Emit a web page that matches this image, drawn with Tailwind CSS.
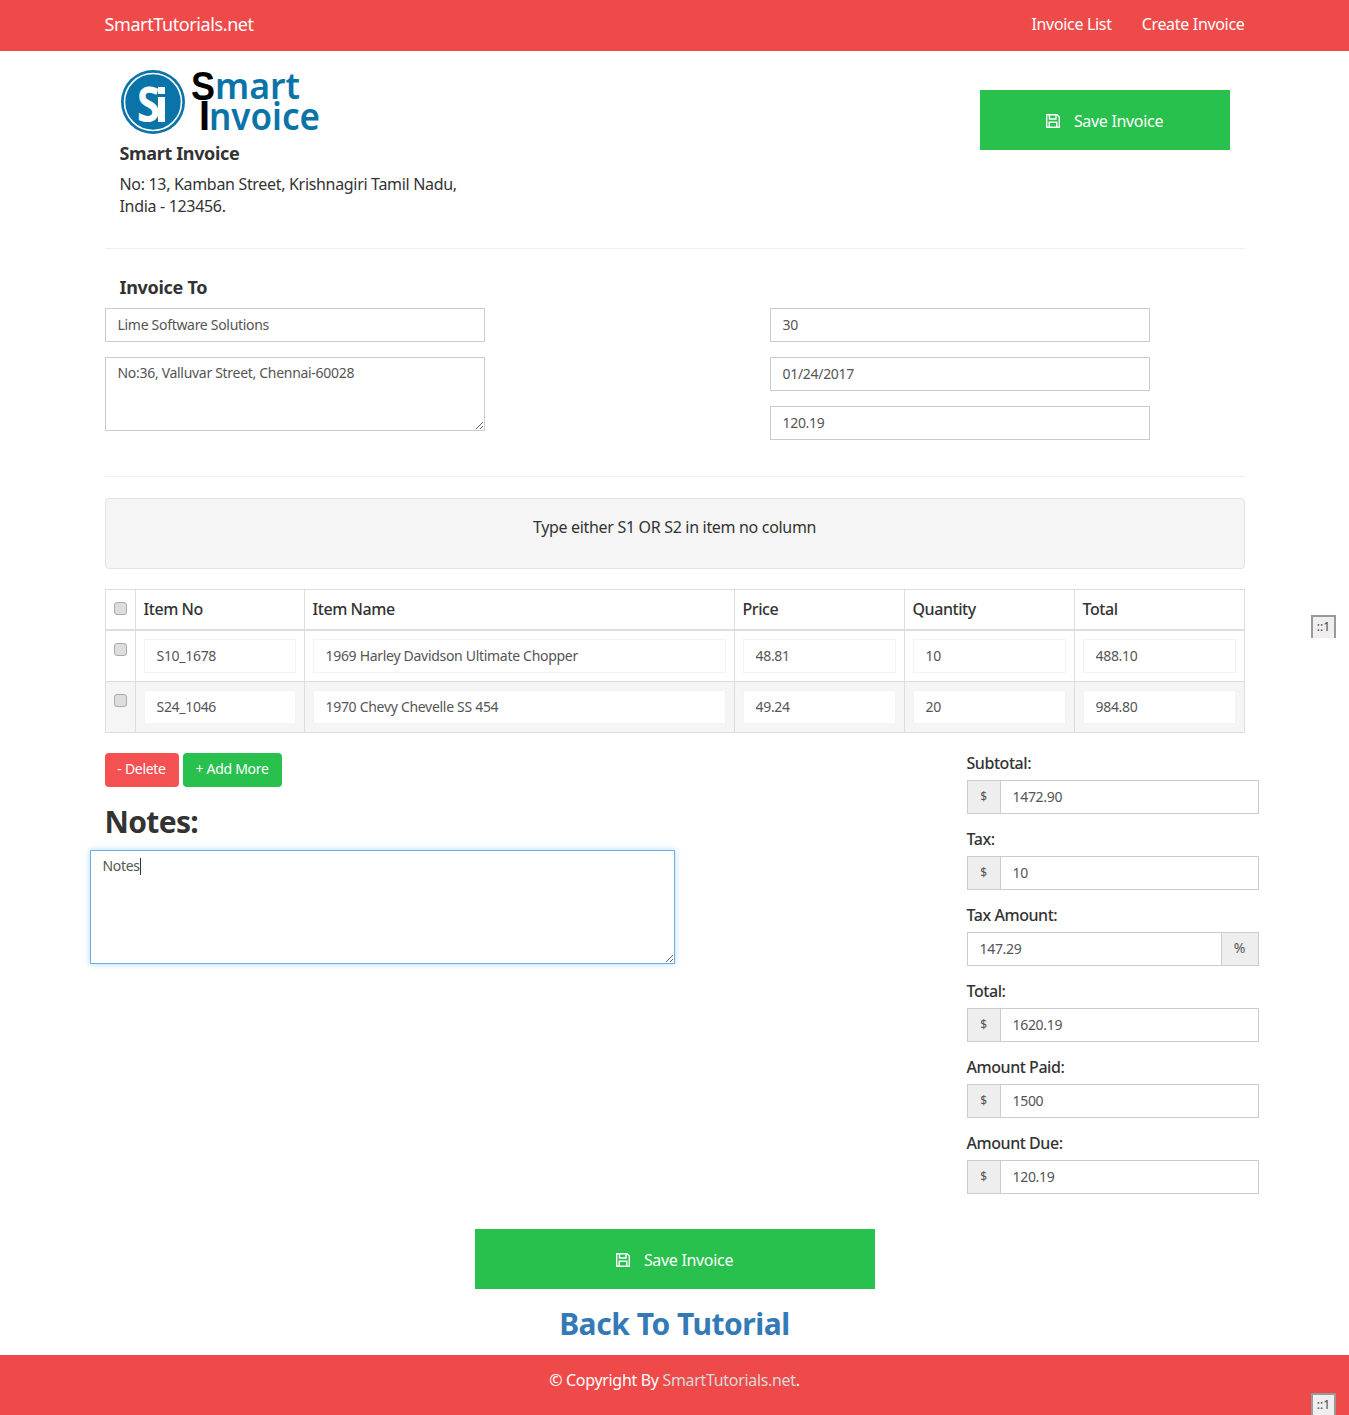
<!DOCTYPE html>
<html lang="en">
<head>
    <meta charset="UTF-8">
    <meta name="viewport" content="width=device-width, initial-scale=1.0">
    <title>Smart Invoice</title>
    <script src="https://cdn.jsdelivr.net/npm/@tailwindcss/browser@4"></script>
</head>
<body class="relative bg-white font-['Noto_Sans',sans-serif] text-[16px] leading-[22px] tracking-[-0.32px] text-[#333]">
    <!-- header -->
    <header class="h-[51px] bg-[#ef4a4a] px-[104.5px] pb-[4px] flex items-center justify-between text-white">
        <a href="#" class="text-[18px] tracking-[-0.4px]">SmartTutorials.net</a>
        <nav class="flex gap-[30px] text-[16px]">
            <a href="#">Invoice List</a>
            <a href="#">Create Invoice</a>
        </nav>
    </header>

    <main class="px-[104.5px]">
        <!-- company -->
        <section class="h-[198px] border-b border-[#eee] flex justify-between pl-[15px] pr-[15px] pt-[17px]">
            <div>
                <svg width="202" height="68" viewBox="0 0 202 68" class="block overflow-visible tracking-normal font-['Noto_Sans',sans-serif]">
                    <circle cx="33" cy="34" r="32" fill="#0a74a8"/>
                    <circle cx="33" cy="34" r="28.5" fill="none" stroke="#fff" stroke-width="1.6"/>
                    <text x="17" y="54" font-size="49" font-weight="700" fill="#fff" textLength="23" lengthAdjust="spacingAndGlyphs">S</text>
                    <rect x="38" y="29" width="7" height="25" fill="#fff"/>
                    <rect x="38" y="19" width="7" height="7" fill="#fff"/>
                    <text x="71" y="32" font-size="41" font-weight="700" fill="#000" font-family="Liberation Sans" textLength="24" lengthAdjust="spacingAndGlyphs">S</text>
                    <text x="95" y="31" font-size="36" font-weight="600" fill="#0a74a8" textLength="85" lengthAdjust="spacingAndGlyphs">mart</text>
                    <text x="79" y="62" font-size="42" font-weight="700" fill="#000" font-family="Liberation Sans" textLength="11" lengthAdjust="spacingAndGlyphs">I</text>
                    <text x="89" y="62" font-size="37" font-weight="600" fill="#0a74a8" textLength="111" lengthAdjust="spacingAndGlyphs">nvoice</text>
                </svg>
                <h2 class="mt-[5px] text-[18px] leading-[25px] font-bold tracking-[-0.35px]">Smart Invoice</h2>
                <p class="mt-[7px] w-[350px]">No: 13, Kamban Street, Krishnagiri Tamil Nadu, India - 123456.</p>
            </div>
            <div class="pt-[22px]">
                <button class="w-[250px] h-[60px] pt-[2px] bg-[#28c14e] text-white flex items-center justify-center gap-[14px]">
                    <svg width="14" height="14" viewBox="0 0 14 14" fill="none" stroke="#fff" stroke-width="1.4">
                        <path d="M.7.7H11L13.3 3V13.3H.7Z"/>
                        <path d="M3.5.7V5H10V.7"/>
                        <path d="M3.2 13.3V8.2H10.8V13.3"/>
                    </svg>
                    <span>Save Invoice</span>
                </button>
            </div>
        </section>

        <!-- invoice to -->
        <section class="h-[228px] border-b border-[#eee] pt-[26px]">
            <h3 class="pl-[15px] text-[18px] leading-[25px] font-bold tracking-[-0.3px]">Invoice To</h3>
            <div class="mt-[8px] flex gap-[285px]">
                <div class="w-[380px] flex flex-col gap-[15px]">
                    <input value="Lime Software Solutions" class="w-full h-[34px] px-[12px] pb-[2px] border border-[#ccc] text-[14px] tracking-[-0.3px] text-[#555] outline-none">
                    <textarea class="block w-full h-[74px] px-[12px] pt-[5px] border border-[#ccc] text-[14px] tracking-[-0.3px] leading-[20px] text-[#555] outline-none">No:36, Valluvar Street, Chennai-60028</textarea>
                </div>
                <div class="w-[380px] flex flex-col gap-[15px]">
                    <input value="30" class="w-full h-[34px] px-[12px] pb-[2px] border border-[#ccc] text-[14px] tracking-[-0.3px] text-[#555] outline-none">
                    <input value="01/24/2017" class="w-full h-[34px] px-[12px] pb-[2px] border border-[#ccc] text-[14px] tracking-[-0.3px] text-[#555] outline-none">
                    <input value="120.19" class="w-full h-[34px] px-[12px] pb-[2px] border border-[#ccc] text-[14px] tracking-[-0.3px] text-[#555] outline-none">
                </div>
            </div>
        </section>

        <!-- hint -->
        <div class="mt-[21px] h-[71px] bg-[#f5f5f5] border border-[#e3e3e3] rounded-[4px] pt-[17px] text-center">Type either S1 OR S2 in item no column</div>

        <!-- items -->
        <table class="mt-[20px] w-full table-fixed border-collapse">
            <colgroup>
                <col class="w-[30px]"><col class="w-[169px]"><col class="w-[430px]"><col class="w-[170px]"><col class="w-[170px]"><col class="w-[170px]">
            </colgroup>
            <thead>
                <tr class="h-[40px] text-left">
                    <th class="border border-b-2 border-[#ddd] px-[8px] align-middle"><input type="checkbox" class="appearance-none block mx-auto mb-[2px] w-[13px] h-[13px] bg-[#ddd] border border-[#aaa] rounded-[3px]"></th>
                    <th class="border border-b-2 border-[#ddd] px-[8px] font-medium tracking-[-0.45px]">Item No</th>
                    <th class="border border-b-2 border-[#ddd] px-[8px] font-medium tracking-[-0.45px]">Item Name</th>
                    <th class="border border-b-2 border-[#ddd] px-[8px] font-medium tracking-[-0.45px]">Price</th>
                    <th class="border border-b-2 border-[#ddd] px-[8px] font-medium tracking-[-0.45px]">Quantity</th>
                    <th class="border border-b-2 border-[#ddd] px-[8px] font-medium tracking-[-0.45px]">Total</th>
                </tr>
            </thead>
            <tbody>
                <tr class="h-[52px]">
                    <td class="border border-[#ddd] px-[8px] pt-[12px] align-top"><input type="checkbox" class="appearance-none block mx-auto w-[13px] h-[13px] bg-[#ddd] border border-[#aaa] rounded-[3px]"></td>
                    <td class="border border-[#ddd] px-[8px]"><input value="S10_1678" class="w-full h-[34px] px-[12px] border border-[#f3f3f3] text-[14px] tracking-[-0.3px] text-[#555] outline-none bg-white"></td>
                    <td class="border border-[#ddd] px-[8px]"><input value="1969 Harley Davidson Ultimate Chopper" class="w-full h-[34px] px-[12px] border border-[#f3f3f3] text-[14px] tracking-[-0.3px] text-[#555] outline-none bg-white"></td>
                    <td class="border border-[#ddd] px-[8px]"><input value="48.81" class="w-full h-[34px] px-[12px] border border-[#f3f3f3] text-[14px] tracking-[-0.3px] text-[#555] outline-none bg-white"></td>
                    <td class="border border-[#ddd] px-[8px]"><input value="10" class="w-full h-[34px] px-[12px] border border-[#f3f3f3] text-[14px] tracking-[-0.3px] text-[#555] outline-none bg-white"></td>
                    <td class="border border-[#ddd] px-[8px]"><input value="488.10" class="w-full h-[34px] px-[12px] border border-[#f3f3f3] text-[14px] tracking-[-0.3px] text-[#555] outline-none bg-white"></td>
                </tr>
                <tr class="h-[51px] bg-[#f5f5f5]">
                    <td class="border border-[#ddd] px-[8px] pt-[12px] align-top"><input type="checkbox" class="appearance-none block mx-auto w-[13px] h-[13px] bg-[#ddd] border border-[#aaa] rounded-[3px]"></td>
                    <td class="border border-[#ddd] px-[8px]"><input value="S24_1046" class="w-full h-[34px] px-[12px] pb-[2px] border border-[#f3f3f3] text-[14px] tracking-[-0.3px] text-[#555] outline-none bg-white"></td>
                    <td class="border border-[#ddd] px-[8px]"><input value="1970 Chevy Chevelle SS 454" class="w-full h-[34px] px-[12px] pb-[2px] border border-[#f3f3f3] text-[14px] tracking-[-0.3px] text-[#555] outline-none bg-white"></td>
                    <td class="border border-[#ddd] px-[8px]"><input value="49.24" class="w-full h-[34px] px-[12px] pb-[2px] border border-[#f3f3f3] text-[14px] tracking-[-0.3px] text-[#555] outline-none bg-white"></td>
                    <td class="border border-[#ddd] px-[8px]"><input value="20" class="w-full h-[34px] px-[12px] pb-[2px] border border-[#f3f3f3] text-[14px] tracking-[-0.3px] text-[#555] outline-none bg-white"></td>
                    <td class="border border-[#ddd] px-[8px]"><input value="984.80" class="w-full h-[34px] px-[12px] pb-[2px] border border-[#f3f3f3] text-[14px] tracking-[-0.3px] text-[#555] outline-none bg-white"></td>
                </tr>
            </tbody>
        </table>

        <!-- notes and totals -->
        <section class="mt-[20px] flex justify-between">
            <div>
                <div class="flex gap-[4px] text-[14px] tracking-[-0.3px]">
                    <button class="w-[74px] h-[34px] pb-[2px] rounded-[4px] bg-[#f45153] text-white">- Delete</button>
                    <button class="w-[99px] h-[34px] pb-[2px] rounded-[4px] bg-[#28c14e] text-white">+ Add More</button>
                </div>
                <h2 class="mt-[18px] text-[30px] leading-[33px] font-bold tracking-[-0.66px]">Notes:</h2>
                <div class="relative mt-[12px] -ml-[15px] w-[585px] h-[114px]">
                    <textarea class="block w-full h-full px-[12px] pt-[5px] border border-[#66afe9] shadow-[0_0_6px_rgba(102,175,233,0.5)] text-[14px] tracking-[-0.3px] leading-[20px] text-[#555] outline-none">Notes</textarea>
                    <span class="absolute left-[50px] top-[8px] w-px h-[17px] bg-[#333]"></span>
                </div>
            </div>
            <div class="w-[292px] -mr-[14px] flex flex-col gap-[15px] tracking-[-0.45px]">
                <div>
                    <label class="block leading-[20px] font-medium">Subtotal:</label>
                    <div class="mt-[7px] flex h-[34px] border border-[#ccc] text-[14px] tracking-[-0.3px] text-[#555]"><span class="w-[33px] bg-[#eee] border-r border-[#ccc] text-[12px] flex items-center justify-center">$</span><input value="1472.90" class="flex-1 min-w-0 px-[12px] outline-none"></div>
                </div>
                <div>
                    <label class="block leading-[20px] font-medium">Tax:</label>
                    <div class="mt-[7px] flex h-[34px] border border-[#ccc] text-[14px] tracking-[-0.3px] text-[#555]"><span class="w-[33px] bg-[#eee] border-r border-[#ccc] text-[12px] flex items-center justify-center">$</span><input value="10" class="flex-1 min-w-0 px-[12px] outline-none"></div>
                </div>
                <div>
                    <label class="block leading-[20px] font-medium">Tax Amount:</label>
                    <div class="mt-[7px] flex h-[34px] border border-[#ccc] text-[14px] tracking-[-0.3px] text-[#555]"><input value="147.29" class="flex-1 min-w-0 px-[12px] outline-none"><span class="w-[37px] bg-[#eee] border-l border-[#ccc] pb-[2px] flex items-center justify-center">%</span></div>
                </div>
                <div>
                    <label class="block leading-[20px] font-medium">Total:</label>
                    <div class="mt-[7px] flex h-[34px] border border-[#ccc] text-[14px] tracking-[-0.3px] text-[#555]"><span class="w-[33px] bg-[#eee] border-r border-[#ccc] text-[12px] flex items-center justify-center">$</span><input value="1620.19" class="flex-1 min-w-0 px-[12px] outline-none"></div>
                </div>
                <div>
                    <label class="block leading-[20px] font-medium">Amount Paid:</label>
                    <div class="mt-[7px] flex h-[34px] border border-[#ccc] text-[14px] tracking-[-0.3px] text-[#555]"><span class="w-[33px] bg-[#eee] border-r border-[#ccc] text-[12px] flex items-center justify-center">$</span><input value="1500" class="flex-1 min-w-0 px-[12px] outline-none"></div>
                </div>
                <div>
                    <label class="block leading-[20px] font-medium">Amount Due:</label>
                    <div class="mt-[7px] flex h-[34px] border border-[#ccc] text-[14px] tracking-[-0.3px] text-[#555]"><span class="w-[33px] bg-[#eee] border-r border-[#ccc] text-[12px] flex items-center justify-center">$</span><input value="120.19" class="flex-1 min-w-0 px-[12px] outline-none"></div>
                </div>
            </div>
        </section>

        <!-- bottom actions -->
        <div class="mt-[35px] flex flex-col items-center">
            <button class="w-[400px] h-[60px] pt-[2px] bg-[#28c14e] text-white flex items-center justify-center gap-[14px]">
                <svg width="14" height="14" viewBox="0 0 14 14" fill="none" stroke="#fff" stroke-width="1.4">
                    <path d="M.7.7H11L13.3 3V13.3H.7Z"/>
                    <path d="M3.5.7V5H10V.7"/>
                    <path d="M3.2 13.3V8.2H10.8V13.3"/>
                </svg>
                <span>Save Invoice</span>
            </button>
            <a href="#" class="mt-[18px] text-[30px] leading-[33px] font-bold tracking-[-0.45px] text-[#337ab7]">Back To Tutorial</a>
        </div>
    </main>

    <footer class="mt-[15px] h-[60px] bg-[#ef4a4a] pt-[14px] text-center text-white">
        © Copyright By <a href="#" class="text-[#d8d8d8]">SmartTutorials.net</a>.
    </footer>

    <!-- debug markers -->
    <div class="absolute left-[1311px] top-[615px] w-[25px] h-[23px] bg-[#f0eeee] border-2 border-b-0 border-[#999] text-[12px] leading-[20px] tracking-normal text-center text-[#444]">::1</div>
    <div class="absolute left-[1311px] top-[1393px] w-[25px] h-[22px] bg-[#f0eeee] border-2 border-b-0 border-[#999] text-[12px] leading-[20px] tracking-normal text-center text-[#444]">::1</div>
</body>
</html>
